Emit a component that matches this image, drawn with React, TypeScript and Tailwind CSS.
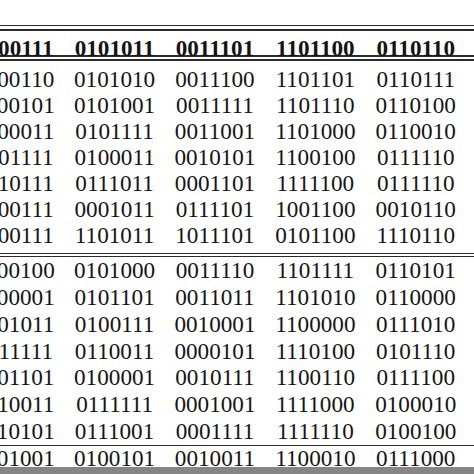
const header = ['1000111', '0101011', '0011101', '1101100', '0110110'];

const groupA = [
  ['1000110', '0101010', '0011100', '1101101', '0110111'],
  ['1000101', '0101001', '0011111', '1101110', '0110100'],
  ['1000011', '0101111', '0011001', '1101000', '0110010'],
  ['1001111', '0100011', '0010101', '1100100', '0111110'],
  ['1010111', '0111011', '0001101', '1111100', '0111110'],
  ['1000111', '0001011', '0111101', '1001100', '0010110'],
  ['1000111', '1101011', '1011101', '0101100', '1110110'],
];

const groupB = [
  ['1000100', '0101000', '0011110', '1101111', '0110101'],
  ['1000001', '0101101', '0011011', '1101010', '0110000'],
  ['1001011', '0100111', '0010001', '1100000', '0111010'],
  ['1011111', '0110011', '0000101', '1110100', '0101110'],
  ['1001101', '0100001', '0010111', '1100110', '0111100'],
  ['1010011', '0111111', '0001001', '1111000', '0100010'],
  ['1010101', '0111001', '0001111', '1111110', '0100100'],
];

const lastRow = ['1001001', '0100101', '0010011', '1100010', '0111000'];

function Rule() {
  return <div className="h-[1.3px] bg-[#2b2b2b]" />;
}

function Row({ cells, bold, height }: { cells: string[]; bold?: boolean; height: string }) {
  return (
    <div className={`grid grid-cols-[repeat(5,100.4px)] items-center ${height} ${bold ? 'font-bold' : ''}`}>
      {cells.map((c, i) => (
        <span key={i} className="text-center leading-none">
          {c}
        </span>
      ))}
    </div>
  );
}

export default function App() {
  return (
    <div className="w-[474px] h-[474px] overflow-hidden bg-white text-[#141414] text-[23.2px] font-['Liberation_Serif','Times_New_Roman',serif]">
      <div className="ml-[-36px] w-[520px] pt-[25px]">
        {/* top double rule */}
        <Rule />
        <div className="h-[3px]" />
        <Rule />

        {/* header */}
        <div className="pt-[6.8px]">
          <Row cells={header} bold height="h-[17.9px]" />
        </div>

        <Rule />
        <div className="h-[2.7px]" />
        <Rule />

        {/* first block */}
        <div className="pt-[6.4px]">
          {groupA.map((r, i) => (
            <Row key={i} cells={r} height="h-[26px]" />
          ))}
        </div>

        <div className="pt-[3.7px]">
          <Rule />
          <div className="h-[1.7px]" />
          <Rule />
        </div>

        {/* second block */}
        <div className="pt-[0.4px]">
          {groupB.map((r, i) => (
            <Row key={i} cells={r} height="h-[26.8px]" />
          ))}
        </div>

        <Rule />

        {/* last row */}
        <div className="pt-[1px]">
          <Row cells={lastRow} height="h-[20px]" />
        </div>

        <div className="h-[7px] bg-[#858585]" />
      </div>
    </div>
  );
}
